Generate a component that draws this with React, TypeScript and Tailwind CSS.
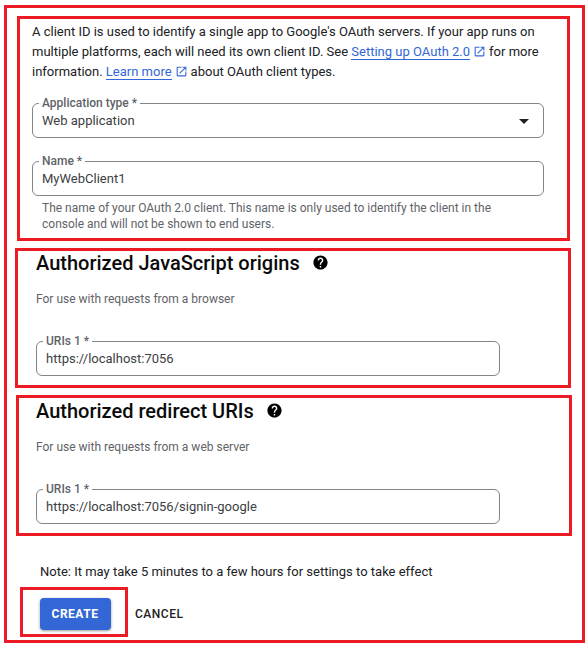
const font = { fontFamily: "Roboto, sans-serif" };

function Ext() {
  return (
    <svg viewBox="0 0 24 24" className="inline-block w-[13px] h-[13px] align-[-2px] ml-[3px] mr-[3px] fill-[#3367d6]">
      <path d="M19 19H5V5h7V3H5a2 2 0 0 0-2 2v14a2 2 0 0 0 2 2h14c1.1 0 2-.9 2-2v-7h-2v7zM14 3v2h3.59l-9.83 9.83 1.41 1.41L19 6.41V10h2V3h-7z" />
    </svg>
  );
}

function Help() {
  return (
    <svg viewBox="0 0 24 24" className="w-[17px] h-[17px] mt-[-2px] fill-black shrink-0">
      <path d="M12 2C6.48 2 2 6.48 2 12s4.48 10 10 10 10-4.48 10-10S17.52 2 12 2zm1 17h-2v-2h2v2zm2.07-7.75-.9.92C13.45 12.9 13 13.5 13 15h-2v-.5c0-1.1.45-2.1 1.17-2.83l1.24-1.26c.37-.36.59-.86.59-1.41 0-1.1-.9-2-2-2s-2 .9-2 2H8c0-2.21 1.79-4 4-4s4 1.79 4 4c0 .88-.36 1.68-.93 2.25z" />
    </svg>
  );
}

function Field({ label, value, caret, className }: { label: string; value: string; caret?: boolean; className: string }) {
  return (
    <fieldset className={"border border-[#80868b] rounded-[6px] h-[41px] px-[6px] m-0 flex items-center " + className}>
      <legend className="px-[3px] ml-0 text-[12px] leading-[12px] font-medium text-[#5f6368]">{label}</legend>
      <div className="flex-1 pl-[3px] pb-[4px] text-[13px] leading-[20px] text-[#3c4043] flex items-center justify-between">
        <span>{value}</span>
        {caret && <span className="w-0 h-0 mr-[8px] border-l-[5px] border-r-[5px] border-t-[5px] border-l-transparent border-r-transparent border-t-[#202124]" />}
      </div>
    </fieldset>
  );
}

function Section({ title, sub, value, className }: { title: string; sub: string; value: string; className: string }) {
  return (
    <section className={"border-[3px] border-[#ed1c24] " + className}>
      <div className="flex items-center gap-[12px] h-[24px]">
        <h2 className="text-[20px] leading-[24px] font-medium text-[#0b0b0b]">{title}</h2>
        <Help />
      </div>
      <p className="mt-[14px] text-[12px] leading-[20px] text-[#5f6368]">{sub}</p>
      <Field label="URIs 1 *" value={value} className="w-[464px] mt-[26px]" />
    </section>
  );
}

export default function App() {
  return (
    <div style={font} className="w-[588px] h-[645px] bg-white overflow-hidden pt-[5px] pl-[4px]">
      <div className="relative w-[581px] h-[638px] border-[3px] border-[#ed1c24]">
        <section className="ml-[10px] mt-[8px] w-[553px] h-[225px] border-[3px] border-[#ed1c24] pl-[12px] pt-[3px]">
          <p className="text-[13px] leading-[20px] text-[#202124] w-[520px]">
            A client ID is used to identify a single app to Google's OAuth servers. If your app runs on multiple platforms, each will need its own client ID. See{" "}
            <span className="text-[#3367d6] border-b border-[#3367d6]">Setting up OAuth 2.0</span>
            <Ext />
            for more information.{" "}
            <span className="text-[#3367d6] border-b border-[#3367d6]">Learn more</span>
            <Ext />
            about OAuth client types.
          </p>
          <Field label="Application type *" value="Web application" caret className="w-[512px] mt-[15px]" />
          <Field label="Name *" value="MyWebClient1" className="w-[512px] mt-[17px]" />
          <p className="ml-[10px] mt-[4px] text-[12px] leading-[16px] text-[#5f6368] w-[480px]">
            The name of your OAuth 2.0 client. This name is only used to identify the client in the console and will not be shown to end users.
          </p>
        </section>
        <Section title="Authorized JavaScript origins" sub="For use with requests from a browser" value="https://localhost:7056" className="ml-[8px] mt-[7px] w-[556px] h-[140px] pl-[18px]" />
        <Section title="Authorized redirect URIs" sub="For use with requests from a web server" value="https://localhost:7056/signin-google" className="ml-[9px] mt-[7px] w-[556px] h-[141px] pl-[17px] pt-[1px]" />
        <p className="ml-[33px] mt-[26px] text-[13px] leading-[20px] text-[#202124]">Note: It may take 5 minutes to a few hours for settings to take effect</p>
        <div className="flex items-center ml-[13px] mt-[5px] h-[50px]">
          <div className="w-[108px] h-[50px] border-[3px] border-[#ed1c24] flex items-center justify-center">
            <button className="w-[71px] h-[32px] ml-[2px] mt-[3px] rounded-[4px] bg-[#3367d6] text-white text-[12px] font-bold tracking-[0.5px] shadow-[0_1px_3px_rgba(0,0,0,0.4)]">CREATE</button>
          </div>
          <span className="ml-[7px] mt-[3px] text-[12px] font-medium text-[#202124] tracking-[0.5px]">CANCEL</span>
        </div>
      </div>
    </div>
  );
}
